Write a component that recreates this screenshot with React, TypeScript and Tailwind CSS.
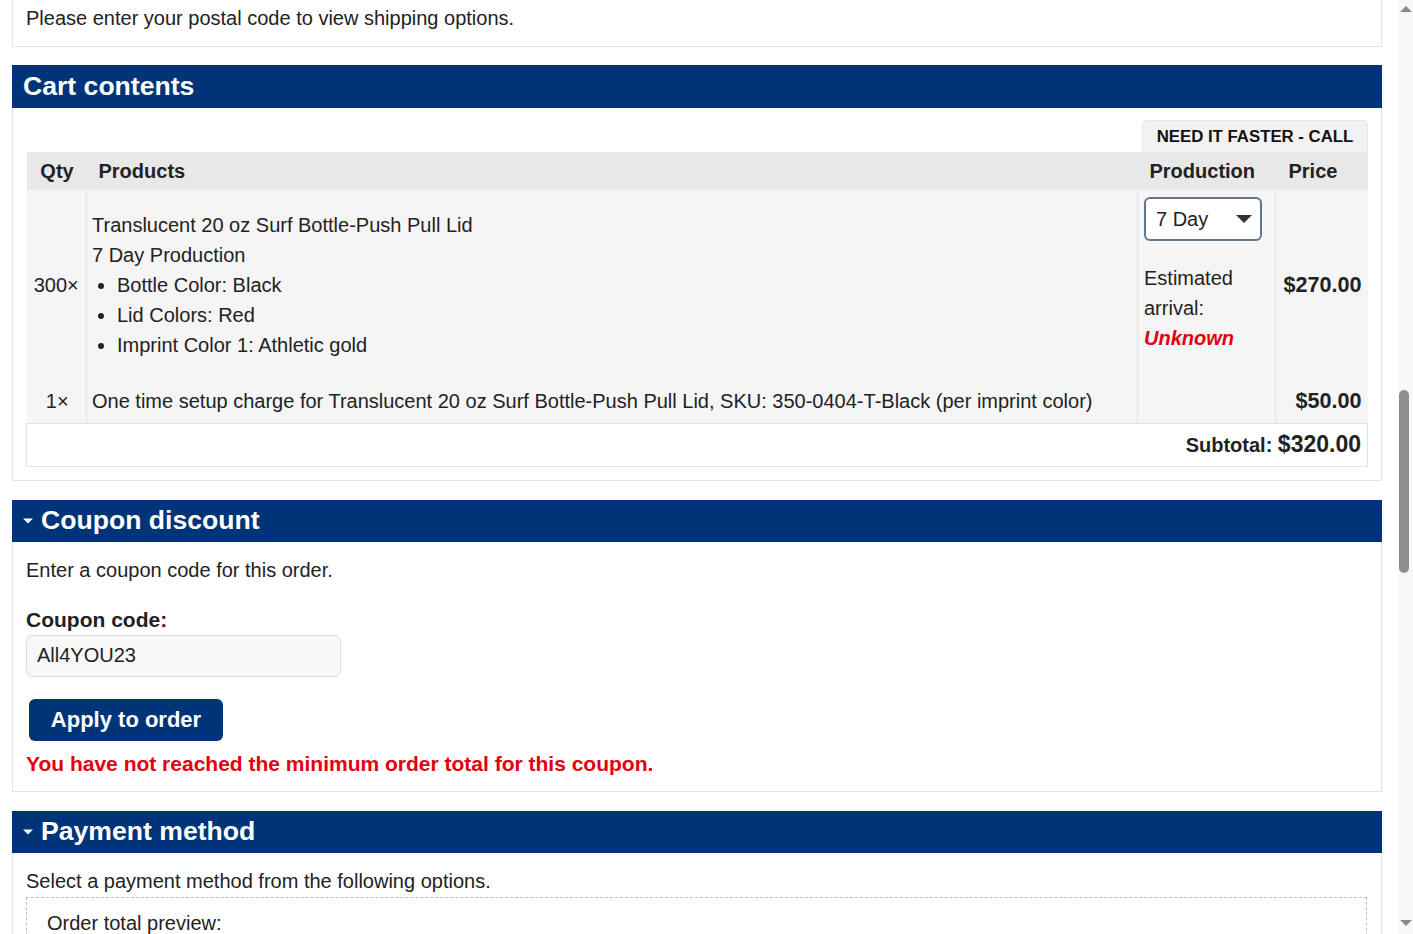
import React from 'react';

const font = { fontFamily: '"Liberation Sans", Arial, sans-serif' } as React.CSSProperties;

function Caret() {
    return (
        <svg width="12" height="8" viewBox="0 0 12 8" className="shrink-0">
            <path d="M1 1.5 L11 1.5 L6 6.5 Z" fill="white" />
        </svg>
    );
}

function SectionHeader({ title, collapsible }: { title: string; collapsible?: boolean }) {
    return (
        <div className={`bg-[#003478] text-white flex items-center pl-[10px] gap-[7px] ${collapsible ? 'h-[42px]' : 'h-[43px]'}`}>
            {collapsible && <Caret />}
            <h2 className={`font-bold text-[26.6px] leading-none ${collapsible ? '' : 'pl-px'}`}>{title}</h2>
        </div>
    );
}

function ProductionSelect() {
    return (
        <div className="w-[118px] h-[44px] bg-white border-[2.5px] border-[#64768a] rounded-[6px] flex items-center justify-between pl-[10px] pr-[8px]">
            <span className="text-[20px] text-[#222]">7 Day</span>
            <svg width="16" height="9" viewBox="0 0 16 9">
                <path d="M0 0 L16 0 L8 8 Z" fill="#333" />
            </svg>
        </div>
    );
}

function Scrollbar() {
    return (
        <div className="w-[15px] h-[934px] bg-[#f8f8f8] flex flex-col items-center shrink-0">
            <svg width="12" height="8" viewBox="0 0 12 8" className="mt-[5px]">
                <path d="M0 7 L12 7 L6 1 Z" fill="#8a8a8a" />
            </svg>
            <div className="h-[377px]" />
            <div className="w-[10px] h-[183px] rounded-full bg-[#8e8e8e] mr-[4px]" />
            <div className="flex-1" />
            <svg width="12" height="8" viewBox="0 0 12 8" className="mb-[7px]">
                <path d="M0 1 L12 1 L6 7 Z" fill="#8a8a8a" />
            </svg>
        </div>
    );
}

export default function App() {
    return (
        <div className="flex h-[934px] overflow-hidden bg-white text-[#222]" style={font}>
            <div className="flex-1 pl-[12px] pr-[16px]">
                {/* Shipping (scrolled off) */}
                <div className="border-x border-b border-[#e4e4e4] h-[47px] pl-[13px] pt-[7px]">
                    <p className="text-[20px] leading-[22px]">Please enter your postal code to view shipping options.</p>
                </div>

                {/* Cart contents */}
                <div className="mt-[18px]">
                    <SectionHeader title="Cart contents" />
                    <div className="border-x border-b border-[#e4e4e4] px-[13px] pt-[12px] pb-[13px]">
                        <div className="flex justify-end">
                            <div className="w-[226px] h-[32px] bg-[#f2f2f2] border border-b-0 border-[#e6e6e6] rounded-t-[5px] flex items-center justify-center">
                                <span className="font-bold text-[16.8px] text-[#111]">NEED IT FASTER - CALL</span>
                            </div>
                        </div>
                        <table className="w-full border-collapse text-[20px]">
                            <thead>
                                <tr className="bg-[#e8e8e8] h-[38px]">
                                    <th className="w-[60px] text-center font-bold text-[20px] pl-[1px]">Qty</th>
                                    <th className="text-left font-bold text-[20px] pl-[12px]">Products</th>
                                    <th className="w-[138px] text-left font-bold text-[20px] pl-[12px]">Production</th>
                                    <th className="w-[92px] text-left font-bold text-[20px] pl-[13px]">Price</th>
                                </tr>
                            </thead>
                            <tbody className="bg-[#f5f5f5]">
                                <tr className="h-[190px]">
                                    <td className="text-center align-middle border-r border-[#e2e2e2]">300×</td>
                                    <td className="align-top pt-[20px] pl-[5px] leading-[30px] border-r border-[#e2e2e2]">
                                        <div>Translucent 20 oz Surf Bottle-Push Pull Lid</div>
                                        <div>7 Day Production</div>
                                        <ul className="list-disc pl-[25px]">
                                            <li>Bottle Color: Black</li>
                                            <li>Lid Colors: Red</li>
                                            <li>Imprint Color 1: Athletic gold</li>
                                        </ul>
                                    </td>
                                    <td className="align-top pt-[7px] pl-[6px] border-r border-[#e2e2e2]">
                                        <ProductionSelect />
                                        <div className="mt-[22px] leading-[30px]">
                                            <div>Estimated</div>
                                            <div>arrival:</div>
                                            <div className="text-[#e3000f] font-bold italic">Unknown</div>
                                        </div>
                                    </td>
                                    <td className="text-right align-middle pr-[6px] font-bold text-[21.6px]">$270.00</td>
                                </tr>
                                <tr className="h-[43px]">
                                    <td className="text-center align-middle border-r border-[#e2e2e2] pl-[2px]">1×</td>
                                    <td className="align-middle pl-[5px] border-r border-[#e2e2e2]">
                                        One time setup charge for Translucent 20 oz Surf Bottle-Push Pull Lid, SKU: 350-0404-T-Black (per imprint color)
                                    </td>
                                    <td className="border-r border-[#e2e2e2]" />
                                    <td className="text-right align-middle pr-[6px] font-bold text-[21.6px]">$50.00</td>
                                </tr>
                                <tr className="h-[43px] bg-white border border-[#e2e2e2]">
                                    <td colSpan={4} className="text-right align-middle pr-[6px] font-bold">
                                        <span className="text-[20px]">Subtotal: </span>
                                        <span className="text-[23px]">$320.00</span>
                                    </td>
                                </tr>
                            </tbody>
                        </table>
                    </div>
                </div>

                {/* Coupon discount */}
                <div className="mt-[19px]">
                    <SectionHeader title="Coupon discount" collapsible />
                    <div className="border-x border-b border-[#e4e4e4] pl-[13px] pt-[17px] pb-[15px]">
                        <p className="text-[20px] leading-[22px]">Enter a coupon code for this order.</p>
                        <label className="block font-bold text-[21px] leading-[24px] mt-[27px]">Coupon code:</label>
                        <input
                            type="text"
                            readOnly
                            value="All4YOU23"
                            className="block mt-[3px] w-[315px] h-[42px] bg-[#f8f8f8] border border-[#dcdcdc] rounded-[6px] px-[10px] text-[20px] text-[#222] outline-none"
                        />
                        <button className="mt-[22px] ml-[3px] w-[194px] h-[42px] bg-[#003478] text-white font-bold text-[22px] rounded-[6px]">
                            Apply to order
                        </button>
                        <p className="mt-[11px] text-[#e3000f] font-bold text-[21px] leading-[24px]">
                            You have not reached the minimum order total for this coupon.
                        </p>
                    </div>
                </div>

                {/* Payment method */}
                <div className="mt-[19px]">
                    <SectionHeader title="Payment method" collapsible />
                    <div className="border-x border-[#e4e4e4] pl-[13px] pr-[14px] pt-[17px] h-[200px]">
                        <p className="text-[20px] leading-[22px]">Select a payment method from the following options.</p>
                        <div className="mt-[5px] border border-dashed border-[#bdbdbd] pl-[20px] pt-[14px] h-[120px]">
                            <p className="text-[20px] leading-[22px]">Order total preview:</p>
                        </div>
                    </div>
                </div>
            </div>
            <Scrollbar />
        </div>
    );
}
